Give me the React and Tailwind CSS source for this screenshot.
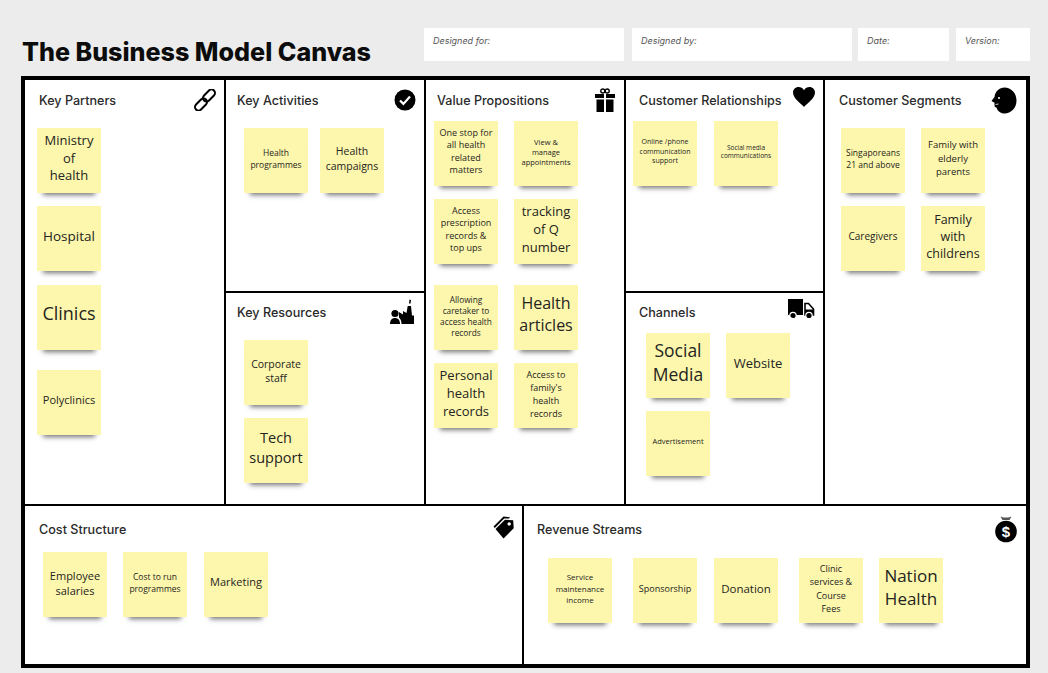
import React from "react";

const Sticky = ({ text, className = "", size = "text-[9px] leading-[12px]" }) => (
	<div
		className={`w-16 h-[65px] shrink-0 px-1 pb-1 flex items-center justify-center text-center whitespace-pre-line antialiased bg-[#fdf7ae] text-[#242420] shadow-[0_8px_5px_-6px_rgba(0,0,0,0.55)] font-['Open_Sans',sans-serif] ${size} ${className}`}
	>
		{text}
	</div>
);

const Cell = ({ title, icon, className = "", rowClass = "pt-2", pr = "pr-2", children }) => (
	<div className={className}>
		<div className={`flex items-center justify-between ${rowClass} ${pr}`}>
			<span className="h-6 pt-0.5 flex items-center text-[12.600px] font-medium antialiased text-[#2a2a2a] whitespace-nowrap font-['Inter',sans-serif]">
				{title}
			</span>
			<span className="h-6 flex items-center">{icon}</span>
		</div>
		{children}
	</div>
);

const LinkIcon = () => (
	<svg width="22" height="22" viewBox="0 0 22 22" fill="none" stroke="#000" strokeWidth="2">
		<rect x="11.500" y="-0.500" width="7" height="14" rx="3.500" transform="rotate(45 15 6.500)" />
		<rect x="3.500" y="8.500" width="7" height="14" rx="3.500" transform="rotate(45 7 15.500)" />
	</svg>
);

const CheckIcon = () => (
	<svg width="22" height="22" viewBox="0 0 22 22">
		<circle cx="11" cy="11" r="10.500" fill="#000" />
		<path d="M6 11.500l3.400 3.400L16 7.600" fill="none" stroke="#fff" strokeWidth="2.200" />
	</svg>
);

const GiftIcon = () => (
	<svg width="20" height="24" viewBox="0 0 20 24">
		<circle cx="7.800" cy="3" r="2" fill="none" stroke="#000" strokeWidth="1.400" />
		<circle cx="12.200" cy="3" r="2" fill="none" stroke="#000" strokeWidth="1.400" />
		<path d="M0 6h9v4H0zM11 6h9v4h-9zM1.500 11.500H9V24H1.500zM11 11.500h7.500V24H11z" fill="#000" />
	</svg>
);

const HeartIcon = () => (
	<svg width="22" height="20" viewBox="0 0 22 20" className="-mt-1.5">
		<path d="M11 20C7 16 0 11 0 5.600 0 2.400 2.500 0 5.500 0 7.800 0 9.800 1.200 11 3.200 12.200 1.200 14.200 0 16.500 0 19.500 0 22 2.400 22 5.600 22 11 15 16 11 20z" fill="#000" />
	</svg>
);

const HeadIcon = () => (
	<svg width="26" height="27" viewBox="0 0 26 27">
		<path d="M13.500 0.500C20 0.500 25.500 6 25.500 13.500S20 26.500 13.500 26.500C9.500 26.500 6.500 24 5.500 20.500 4 20.500 3.200 19.500 3.800 18L3 17 4 16 0.500 14 3.500 10C4 4.500 8.500 0.500 13.500 0.500z" fill="#000" />
		<circle cx="8" cy="11" r="1" fill="#fff" />
		<path d="M4.500 17.500l3-0.500" stroke="#fff" strokeWidth="0.800" />
	</svg>
);

const FactoryIcon = () => (
	<svg width="26" height="26" viewBox="0 0 26 26">
		<circle cx="5" cy="14.500" r="3.600" fill="#000" />
		<path d="M0 25c0-4 2-6 5-6s5 2 5 6z" fill="#000" />
		<path d="M9 13l4 2.500V12l3.500 2 1.200-7h3.300l1 9.500h2V25H11.500c0-3-0.800-5-2.500-6.500z" fill="#000" />
		<path d="M19.500 0.500l1.500 0.500-0.500 3.500h-1.500z" fill="#000" />
	</svg>
);

const TruckIcon = () => (
	<svg width="28" height="21" viewBox="0 0 28 21" className="-mt-1.5">
		<path d="M1 0h15v16H1z" fill="#000" />
		<path d="M18 4.500h3.500l5 5.500v6H18z" fill="none" stroke="#000" strokeWidth="1.600" />
		<path d="M18 10.500h9v5.500h-9z" fill="#000" />
		<circle cx="6" cy="16.500" r="3.200" fill="#000" stroke="#fff" strokeWidth="1.200" />
		<circle cx="22" cy="16.500" r="3.200" fill="#000" stroke="#fff" strokeWidth="1.200" />
	</svg>
);

const TagIcon = () => (
	<svg width="21" height="23" viewBox="0 0 21 23" className="-mt-1">
		<path d="M0.500 10.500L10.500 0.500l6.500 0.800-1 1.200H11.200L1.800 12z" fill="#000" />
		<path fillRule="evenodd" d="M2.500 13L12 3.800l8.200 0.400 0.500 8L10.500 22.500zM16.200 6.200a1.700 1.700 0 1 0 0.010 0z" fill="#000" />
	</svg>
);

const BagIcon = () => (
	<svg width="22" height="27" viewBox="0 0 22 27">
		<path d="M5.500 0.500l3 1h5l3-1-2 3.500h-7z" fill="#555" />
		<circle cx="11" cy="15.500" r="10.800" fill="#000" />
		<text x="11" y="21" textAnchor="middle" fontSize="15" fontWeight="700" fill="#fff" fontFamily="'Liberation Sans', sans-serif">$</text>
	</svg>
);

const Field = ({ label, className }) => (
	<div className={`h-[33px] bg-white pl-[9px] pt-[7px] text-[9px] leading-3 italic antialiased text-[#555] font-['Inter',sans-serif] ${className}`}>
		{label}
	</div>
);

export default function App() {
	return (
		<div className="w-[1048px] h-[673px] overflow-hidden bg-[#ececec] pt-7 pl-[21px]">
			{/* header */}
			<div className="flex h-[48px]">
				<h1 className="w-[403px] pt-[9px] pl-px text-[25.100px] leading-[30px] font-extrabold antialiased text-[#0c0c0c] whitespace-nowrap font-['Inter',sans-serif]">
					The Business Model Canvas
				</h1>
				<Field label="Designed for:" className="w-[200px] mr-2" />
				<Field label="Designed by:" className="w-[220px] mr-1.5" />
				<Field label="Date:" className="w-[91px] mr-[7px]" />
				<Field label="Version:" className="w-[74px]" />
			</div>

			{/* canvas */}
			<div className="w-[1009px] h-[592px] border-4 border-black bg-white">
				<div className="flex h-[426px] border-b-2 border-black">
					<Cell title="Key Partners" icon={<LinkIcon />} className="w-[201px] border-r-2 border-black pl-3.5">
						<div className="-ml-0.5 mt-4 flex flex-col">
							<Sticky text={"Ministry\nof\nhealth"} size="text-[13px] leading-[17.500px]" />
							<Sticky text="Hospital" size="text-[13.500px]" className="mt-[13px]" />
							<Sticky text="Clinics" size="text-[18px]" className="mt-3.5 pb-2" />
							<Sticky text="Polyclinics" size="text-[11px]" className="mt-5" />
						</div>
					</Cell>

					<div className="w-[200px] flex flex-col border-r-2 border-black">
						<Cell title="Key Activities" icon={<CheckIcon />} className="h-[213px] border-b-2 border-black pl-[11px]">
							<div className="ml-[7px] mt-4 flex gap-3">
								<Sticky text={"Health\nprogrammes"} size="text-[8.500px] leading-[12px]" />
								<Sticky text={"Health\ncampaigns"} size="text-[10.500px] leading-[14.500px]" />
							</div>
						</Cell>
						<Cell title="Key Resources" icon={<FactoryIcon />} rowClass="pt-[7px]" className="flex-1 pl-[11px]">
							<div className="ml-[7px] mt-4 flex flex-col gap-[13px]">
								<Sticky text={"Corporate\nstaff"} size="text-[10.500px] leading-[14px]" />
								<Sticky text={"Tech\nsupport"} size="text-[14.500px] leading-[20px]" className="pb-1.5" />
							</div>
						</Cell>
					</div>

					<Cell title="Value Propositions" icon={<GiftIcon />} pr="pr-[9px]" className="w-[200px] border-r-2 border-black pl-[11px]">
						<div className="-ml-[3px] mt-[9px] grid grid-cols-[64px_64px] gap-x-4 gap-y-[13px]">
							<Sticky text={"One stop for\nall health\nrelated\nmatters"} size="text-[9px] leading-[12.500px]" />
							<Sticky text={"View &\nmanage\nappointments"} size="text-[7.500px] leading-[10px]" />
							<Sticky text={"Access\nprescription\nrecords &\ntop ups"} size="text-[9px] leading-[12.500px]" />
							<Sticky text={"tracking\nof Q\nnumber"} size="text-[13px] leading-[18px]" className="pb-1.5" />
							<Sticky text={"Allowing\ncaretaker to\naccess health\nrecords"} size="text-[8.300px] leading-[11px]" className="mt-2" />
							<Sticky text={"Health\narticles"} size="text-[16px] leading-[22px]" className="mt-2 pb-2" />
							<Sticky text={"Personal\nhealth\nrecords"} size="text-[13px] leading-[18px]" className="pb-1.5" />
							<Sticky text={"Access to\nfamily's\nhealth\nrecords"} size="text-[9px] leading-[13px]" />
						</div>
					</Cell>

					<div className="w-[199px] flex flex-col border-r-2 border-black">
						<Cell title="Customer Relationships" icon={<HeartIcon />} className="h-[213px] border-b-2 border-black pl-[13px]">
							<div className="-ml-1.5 mt-[9px] flex gap-[17px]">
								<Sticky text={"Online /phone\ncommunication\nsupport"} size="text-[7px] leading-[9.500px]" />
								<Sticky text={"Social media\ncommunications"} size="text-[6.500px] leading-[8px]" />
							</div>
						</Cell>
						<Cell title="Channels" icon={<TruckIcon />} rowClass="pt-[7px]" className="flex-1 pl-[13px]">
							<div className="ml-[7px] mt-[9px] grid grid-cols-[64px_64px] gap-x-4 gap-y-[13px]">
								<Sticky text={"Social\nMedia"} size="text-[17.500px] leading-[24px]" className="pb-2" />
								<Sticky text="Website" size="text-[13px]" />
								<Sticky text="Advertisement" size="text-[7.500px]" />
							</div>
						</Cell>
					</div>

					<Cell title="Customer Segments" icon={<HeadIcon />} pr="pr-[9px]" className="flex-1 pl-3.5">
						<div className="ml-0.5 mt-4 grid grid-cols-[64px_64px] gap-x-4 gap-y-[13px]">
							<Sticky text={"Singaporeans\n21 and above"} size="text-[8.500px] leading-[12px]" />
							<Sticky text={"Family with\nelderly\nparents"} size="text-[9.500px] leading-[13.500px]" />
							<Sticky text="Caregivers" size="text-[10px]" />
							<Sticky text={"Family\nwith\nchildrens"} size="text-[12.500px] leading-[17px]" />
						</div>
					</Cell>
				</div>

				<div className="flex h-[158px]">
					<Cell title="Cost Structure" icon={<TagIcon />} rowClass="pt-[11px]" className="w-[499px] border-r-2 border-black pl-3.5">
						<div className="ml-1 mt-[11px] flex gap-4">
							<Sticky text={"Employee\nsalaries"} size="text-[11px] leading-[15px]" />
							<Sticky text={"Cost to run\nprogrammes"} size="text-[8.500px] leading-[12px]" />
							<Sticky text="Marketing" size="text-[11px]" className="ml-px" />
						</div>
					</Cell>
					<Cell title="Revenue Streams" icon={<BagIcon />} rowClass="pt-[11px]" pr="pr-[9px]" className="flex-1 pl-[13px]">
						<div className="ml-[11px] mt-[17px] flex">
							<Sticky text={"Service\nmaintenance\nincome"} size="text-[8px] leading-[11.500px]" />
							<Sticky text="Sponsorship" size="text-[9px]" className="ml-[21px]" />
							<Sticky text="Donation" size="text-[11.500px]" className="ml-[17px]" />
							<Sticky text={"Clinic\nservices &\nCourse\nFees"} size="text-[9px] leading-[13.500px]" className="ml-[21px]" />
							<Sticky text={"Nation\nHealth"} size="text-[17px] leading-[23px]" className="ml-4 pb-2" />
						</div>
					</Cell>
				</div>
			</div>
		</div>
	);
}
